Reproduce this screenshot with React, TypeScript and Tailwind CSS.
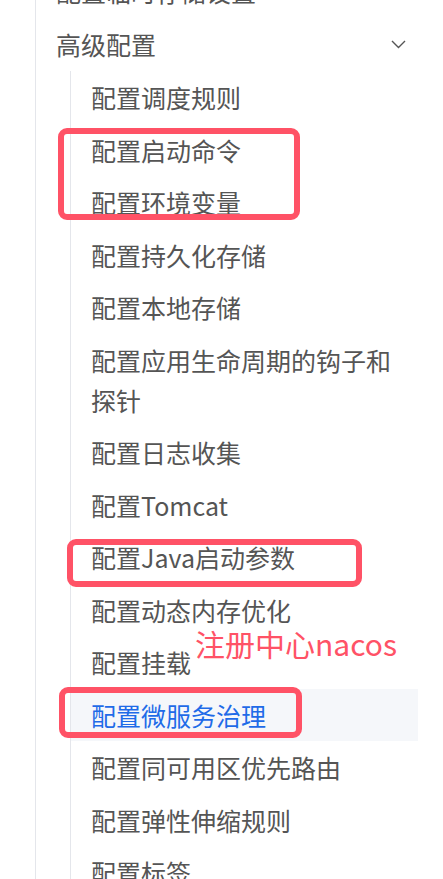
const subItems = [
  '配置调度规则',
  '配置启动命令',
  '配置环境变量',
  '配置持久化存储',
  '配置本地存储',
  '配置应用生命周期的钩子和探针',
  '配置日志收集',
  '配置Tomcat',
  '配置Java启动参数',
  '配置动态内存优化',
  '配置挂载',
  '配置微服务治理',
  '配置同可用区优先路由',
  '配置弹性伸缩规则',
  '配置标签',
]

const active = '配置微服务治理'

const App = () => {
  return (
    <div
      className="relative h-[879px] w-[443px] overflow-hidden bg-white"
      style={{ fontFamily: '"Noto Sans CJK SC", "Noto Sans", sans-serif' }}
    >
      {/* side menu, scrolled part way */}
      <div className="-mt-[35px] ml-[35px] w-[383px] min-h-[1000px] border-l border-[#e4e6eb] text-[25px] text-[#555]">
        <div className="flex h-[53px] items-center pl-[20px]">配置临时存储设置</div>
        <div className="flex h-[53px] items-center justify-between pl-[20px] pr-[12px]">
          <span>高级配置</span>
          <svg width="15" height="9" viewBox="0 0 15 9" fill="none">
            <path d="M1 1l6.5 6.5L14 1" stroke="#555" strokeWidth="1.4" />
          </svg>
        </div>
        <ul className="ml-[34px] min-h-[900px] border-l border-[#e4e6eb]">
          {subItems.map((item) => (
            <li
              key={item}
              className={
                item === active
                  ? 'bg-[#f5f7fa] py-[6.25px] pl-[20px] pr-[14px] leading-[40px] text-[#1f6be8]'
                  : 'py-[6.25px] pl-[20px] pr-[14px] leading-[40px]'
              }
            >
              {item}
            </li>
          ))}
        </ul>
      </div>

      {/* red annotations */}
      <div className="absolute left-[58px] top-[128px] h-[92px] w-[242px] rounded-[9px] border-[6px] border-[#ff5266]" />
      <div className="absolute left-[67px] top-[539px] h-[48px] w-[295px] rounded-[9px] border-[6px] border-[#ff5266]" />
      <div className="absolute left-[59px] top-[687px] h-[51px] w-[243px] rounded-[9px] border-[6px] border-[#ff5266]" />
      <div className="absolute left-[195px] top-[628px] text-[30px] leading-[30px] text-[#ff5266]">注册中心nacos</div>
    </div>
  )
}

export default App
